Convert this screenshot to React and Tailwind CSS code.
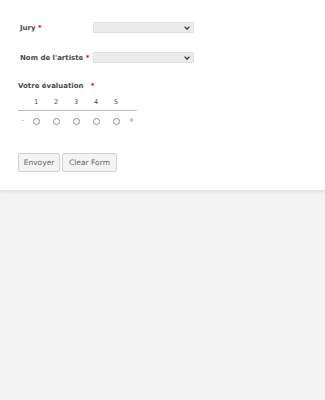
import React from 'react'

const font = { fontFamily: '"DejaVu Sans", Verdana, sans-serif' }

const Star = () => <span className="text-[#e00] font-bold">*</span>

const FakeSelect = () => (
  <div className="w-[101px] h-[11px] bg-[#ececec] border border-dotted border-[#d6d6d6] rounded-[1px] flex items-center justify-end pr-[3px]">
    <svg width="6" height="4" viewBox="0 0 6 4">
      <path d="M0.6 0.6 L3 3.2 L5.4 0.6" fill="none" stroke="#333" strokeWidth="1.3" />
    </svg>
  </div>
)

const Radio = () => (
  <span className="block w-[7px] h-[7px] rounded-full border border-[#909090] bg-white" />
)

export default function App() {
  return (
    <div className="min-h-[400px] bg-[#f3f3f3] text-[#4a4a4a]" style={font}>
      <div className="bg-white pb-[18px] shadow-[0_2px_3px_rgba(0,0,0,0.08)] relative">
        <div className="h-[22px]" />

        {/* Jury */}
        <div className="flex items-center h-[11px] pl-[20px]">
          <div className="w-[73px] text-[7px] font-bold leading-[10px]">
            Jury <Star />
          </div>
          <FakeSelect />
        </div>

        {/* Nom de l'artiste */}
        <div className="flex items-center h-[11px] pl-[20px] mt-[19px]">
          <div className="w-[73px] text-[7px] font-bold leading-[10px] whitespace-nowrap">
            Nom de l'artiste <Star />
          </div>
          <FakeSelect />
        </div>

        {/* Votre évaluation */}
        <div className="pl-[18px] mt-[18px] text-[7px] font-bold leading-[10px]">
          Votre évaluation&nbsp;&nbsp; <Star />
        </div>

        <div className="ml-[18px] mt-[7px] w-[119px]">
          <div className="grid grid-cols-[8px_repeat(5,20px)_11px] h-[8px] text-[6.5px] leading-[8px] text-center">
            <span />
            <span>1</span>
            <span>2</span>
            <span>3</span>
            <span>4</span>
            <span>5</span>
            <span />
          </div>
          <div className="mt-[4px] h-px bg-[#bdbdbd]" />
          <div className="grid grid-cols-[8px_repeat(5,20px)_11px] h-[20px] items-center justify-items-center text-[6.5px] text-[#777]">
            <span className="pl-[2px]">-</span>
            <Radio />
            <Radio />
            <Radio />
            <Radio />
            <Radio />
            <span>+</span>
          </div>
        </div>

        {/* Buttons */}
        <div className="flex gap-[2px] pl-[18px] mt-[22px]">
          <button className="w-[42px] h-[19px] bg-[#f4f4f4] border border-[#d2d2d2] rounded-[2px] text-[7.5px] text-[#666]">
            Envoyer
          </button>
          <button className="w-[55px] h-[19px] bg-[#f4f4f4] border border-[#d2d2d2] rounded-[2px] text-[7.5px] text-[#666]">
            Clear Form
          </button>
        </div>
      </div>
    </div>
  )
}
